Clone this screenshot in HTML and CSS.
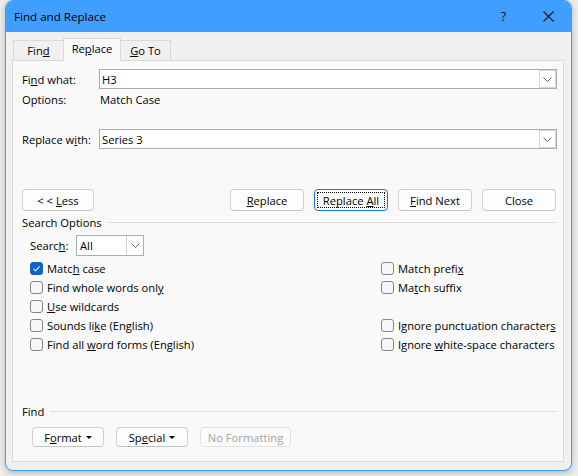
FILE: index.html
```html
<!DOCTYPE html>
<html>
<head>
<meta charset="utf-8">
<title>Find and Replace</title>
<link rel="stylesheet" href="styles.css">
</head>
<body>
<div class="window">
  <div class="titlebar">
    <span class="title">Find and Replace</span>
    <span class="tb-btn help">?</span>
    <span class="tb-btn close"><svg width="11" height="11" viewBox="0 0 11 11"><path d="M0.5 0.5L10.5 10.5M10.5 0.5L0.5 10.5" stroke="#1a1a1a" stroke-width="1.1" fill="none"/></svg></span>
  </div>
  <div class="client">
    <div class="tabs">
      <div class="tab tab-find"><span>Fin<u>d</u></span></div>
      <div class="tab tab-replace active"><span>Re<u>p</u>lace</span></div>
      <div class="tab tab-goto"><span><u>G</u>o To</span></div>
    </div>
    <div class="panel">
      <div class="field-row first">
        <span class="lbl">Fi<u>n</u>d what:</span>
        <div class="combo"><span class="val">H3</span><span class="drop"><svg width="9" height="5" viewBox="0 0 9 5"><path d="M0.5 0.5L4.5 4.5L8.5 0.5" stroke="#606060" stroke-width="1" fill="none"/></svg></span></div>
      </div>
      <div class="options-row">
        <span class="lbl">Options:</span><span class="opt-val">Match Case</span>
      </div>
      <div class="field-row second">
        <span class="lbl">Replace w<u>i</u>th:</span>
        <div class="combo"><span class="val">Series 3</span><span class="drop"><svg width="9" height="5" viewBox="0 0 9 5"><path d="M0.5 0.5L4.5 4.5L8.5 0.5" stroke="#606060" stroke-width="1" fill="none"/></svg></span></div>
      </div>
      <div class="btn-row">
        <div class="btn less"><span>&lt; &lt; <u>L</u>ess</span></div>
        <div class="btn-group">
          <div class="btn"><span><u>R</u>eplace</span></div>
          <div class="btn focused"><span>Replace <u>A</u>ll</span></div>
          <div class="btn"><span><u>F</u>ind Next</span></div>
          <div class="btn"><span>Close</span></div>
        </div>
      </div>
      <div class="group-head search-head"><span>Search Options</span></div>
      <div class="search-row">
        <span class="search-lbl">Searc<u>h</u>:</span>
        <div class="select"><span class="val">All</span><span class="sel-drop"><svg width="9" height="5" viewBox="0 0 9 5"><path d="M0.5 0.5L4.5 4.5L8.5 0.5" stroke="#606060" stroke-width="1" fill="none"/></svg></span></div>
      </div>
      <div class="checks">
        <div class="chk"><span class="box checked"><svg width="11" height="11" viewBox="0 0 11 11"><path d="M2.5 5.8L4.6 7.8L8.6 3.4" stroke="#fff" stroke-width="1.1" fill="none"/></svg></span><span class="t">Matc<u>h</u> case</span></div>
        <div class="chk"><span class="box"></span><span class="t">Match prefi<u>x</u></span></div>
        <div class="chk"><span class="box"></span><span class="t">Find whole words onl<u>y</u></span></div>
        <div class="chk"><span class="box"></span><span class="t">Ma<u>t</u>ch suffix</span></div>
        <div class="chk"><span class="box"></span><span class="t"><u>U</u>se wildcards</span></div>
        <div class="chk empty"></div>
        <div class="chk"><span class="box"></span><span class="t">Sounds li<u>k</u>e (English)</span></div>
        <div class="chk"><span class="box"></span><span class="t">Ignore punctuation character<u>s</u></span></div>
        <div class="chk"><span class="box"></span><span class="t">Find all <u>w</u>ord forms (English)</span></div>
        <div class="chk"><span class="box"></span><span class="t">Ignore <u>w</u>hite-space characters</span></div>
      </div>
      <div class="group-head find-head"><span>Find</span></div>
      <div class="bottom-row">
        <div class="btn small fmt"><span>F<u>o</u>rmat</span><span class="caret"></span></div>
        <div class="btn small fmt"><span>Sp<u>e</u>cial</span><span class="caret"></span></div>
        <div class="btn small disabled"><span>No Formatting</span></div>
      </div>
    </div>
  </div>
</div>
<div class="annot"></div>
</body>
</html>
```
FILE: styles.css
```css
* { box-sizing: border-box; }
html, body { margin: 0; padding: 0; }
body {
  width: 578px;
  height: 476px;
  background: #ececec;
  font-family: "Open Sans", "Noto Sans", sans-serif;
  font-size: 11.2px;
  color: #000;
  position: relative;
  overflow: hidden;
}
u { text-decoration: underline; text-underline-offset: 1px; text-decoration-thickness: 1px; }

.window {
  margin-left: 5px;
  width: 567px;
  height: 471px;
  border: 1px solid #3f9bff;
  border-radius: 8px;
  background: #f0f0f0;
  display: flex;
  flex-direction: column;
  overflow: hidden;
  box-shadow: 0 2px 6px rgba(0,0,0,0.22);
}
.titlebar {
  flex: none;
  height: 31px;
  background: #409eff;
  display: flex;
  align-items: center;
  padding-left: 8px;
}
.title { font-size: 11.6px; color: #000; }
.tb-btn {
  width: 45px;
  height: 31px;
  display: flex;
  align-items: center;
  justify-content: center;
}
.help { margin-left: auto; font-size: 12.5px; color: #111; }

.client {
  flex: 1;
  display: flex;
  flex-direction: column;
  min-height: 0;
}
.tabs {
  margin: 6px 0 0 7px;
  height: 22px;
  display: flex;
  align-items: flex-end;
  position: relative;
  z-index: 2;
}
.tab {
  height: 20px;
  border: 1px solid #d9d9d9;
  border-bottom: none;
  background: #f0f0f0;
  display: flex;
  align-items: center;
  justify-content: center;
  margin-left: -1px;
}
.tab-find { width: 51px; margin-left: 0; }
.tab-replace { width: 58px; }
.tab-goto { width: 51px; }
.tab.active {
  height: 23px;
  margin-bottom: -1px;
  background: #f9f9f9;
  padding-bottom: 3px;
  position: relative;
  z-index: 3;
}

.panel {
  flex: 1;
  margin: 0 7px 8px 6px;
  border: 1px solid #dadada;
  background: #f9f9f9;
  padding: 0 6px 0 9px;
  display: flex;
  flex-direction: column;
  position: relative;
  z-index: 1;
}
.field-row {
  display: flex;
  align-items: center;
  height: 20px;
}
.field-row.first { margin-top: 8px; }
.field-row.second { margin-top: 22px; }
.lbl { width: 77px; flex: none; }
.combo {
  flex: 1;
  height: 20px;
  border: 1px solid #adadad;
  background: #fff;
  display: flex;
  align-items: center;
}
.combo .val { flex: 1; padding-left: 2px; }
.drop {
  width: 17px;
  height: 18px;
  border: 1px solid #d6d6d6;
  background: #fff;
  display: flex;
  align-items: center;
  justify-content: center;
}
.options-row {
  margin-top: 2px;
  height: 16px;
  display: flex;
  align-items: center;
}
.opt-val { padding-left: 1px; }

.btn-row {
  margin-top: 40px;
  display: flex;
  justify-content: space-between;
  padding-right: 1px;
}
.btn-group { display: flex; gap: 10px; }
.btn {
  width: 74px;
  height: 22px;
  border: 1px solid #d0d0d0;
  border-bottom-color: #c3c3c3;
  border-radius: 4px;
  background: #fdfdfd;
  display: flex;
  align-items: center;
  justify-content: center;
  white-space: nowrap;
}
.btn.less { width: 72px; }
.btn.focused {
  border: 1px solid #1a73d0;
  outline: 1px dotted #000;
  outline-offset: -4px;
}

.group-head {
  height: 16px;
  display: flex;
  align-items: center;
}
.group-head::after {
  content: "";
  flex: 1;
  height: 1px;
  background: #dcdcdc;
  margin-left: 6px;
}
.search-head { margin-top: 3px; }

.search-row {
  margin-top: 5px;
  height: 21px;
  display: flex;
  align-items: center;
  padding-left: 8px;
}
.search-lbl { width: 46px; }
.select {
  width: 68px;
  height: 21px;
  border: 1px solid #adadad;
  background: #fff;
  display: flex;
  align-items: center;
}
.select .val { flex: 1; padding-left: 3px; }
.sel-drop {
  width: 17px;
  height: 100%;
  border-left: 1px solid #cfcfcf;
  display: flex;
  align-items: center;
  justify-content: center;
}

.checks {
  margin-top: 3px;
  padding-left: 8px;
  display: grid;
  grid-template-columns: 351px minmax(0, 1fr);
  grid-auto-rows: 19px;
}
.chk { display: flex; align-items: center; white-space: nowrap; }
.box {
  width: 13px;
  height: 13px;
  border: 1px solid #858585;
  border-radius: 3px;
  background: #f7f7f7;
  margin-right: 4px;
  flex: none;
  display: flex;
  align-items: center;
  justify-content: center;
}
.box.checked { background: #0f63c4; border-color: #0f63c4; }

.find-head { margin-top: 49px; }
.bottom-row {
  margin-top: 8px;
  display: flex;
  gap: 12px;
  padding-left: 10px;
}
.btn.small { height: 20px; width: 72px; }
.btn.disabled { width: 91px; color: #a3a3a3; border-color: #e2e2e2; background: #fbfbfb; }
.caret {
  width: 0;
  height: 0;
  border-left: 3px solid transparent;
  border-right: 3px solid transparent;
  border-top: 3px solid #000;
  margin-left: 4px;
}

.annot {
  position: absolute;
  left: 20px;
  top: 255px;
  width: 99px;
  height: 23px;
  border: 3px solid #ef0000;
}
```
